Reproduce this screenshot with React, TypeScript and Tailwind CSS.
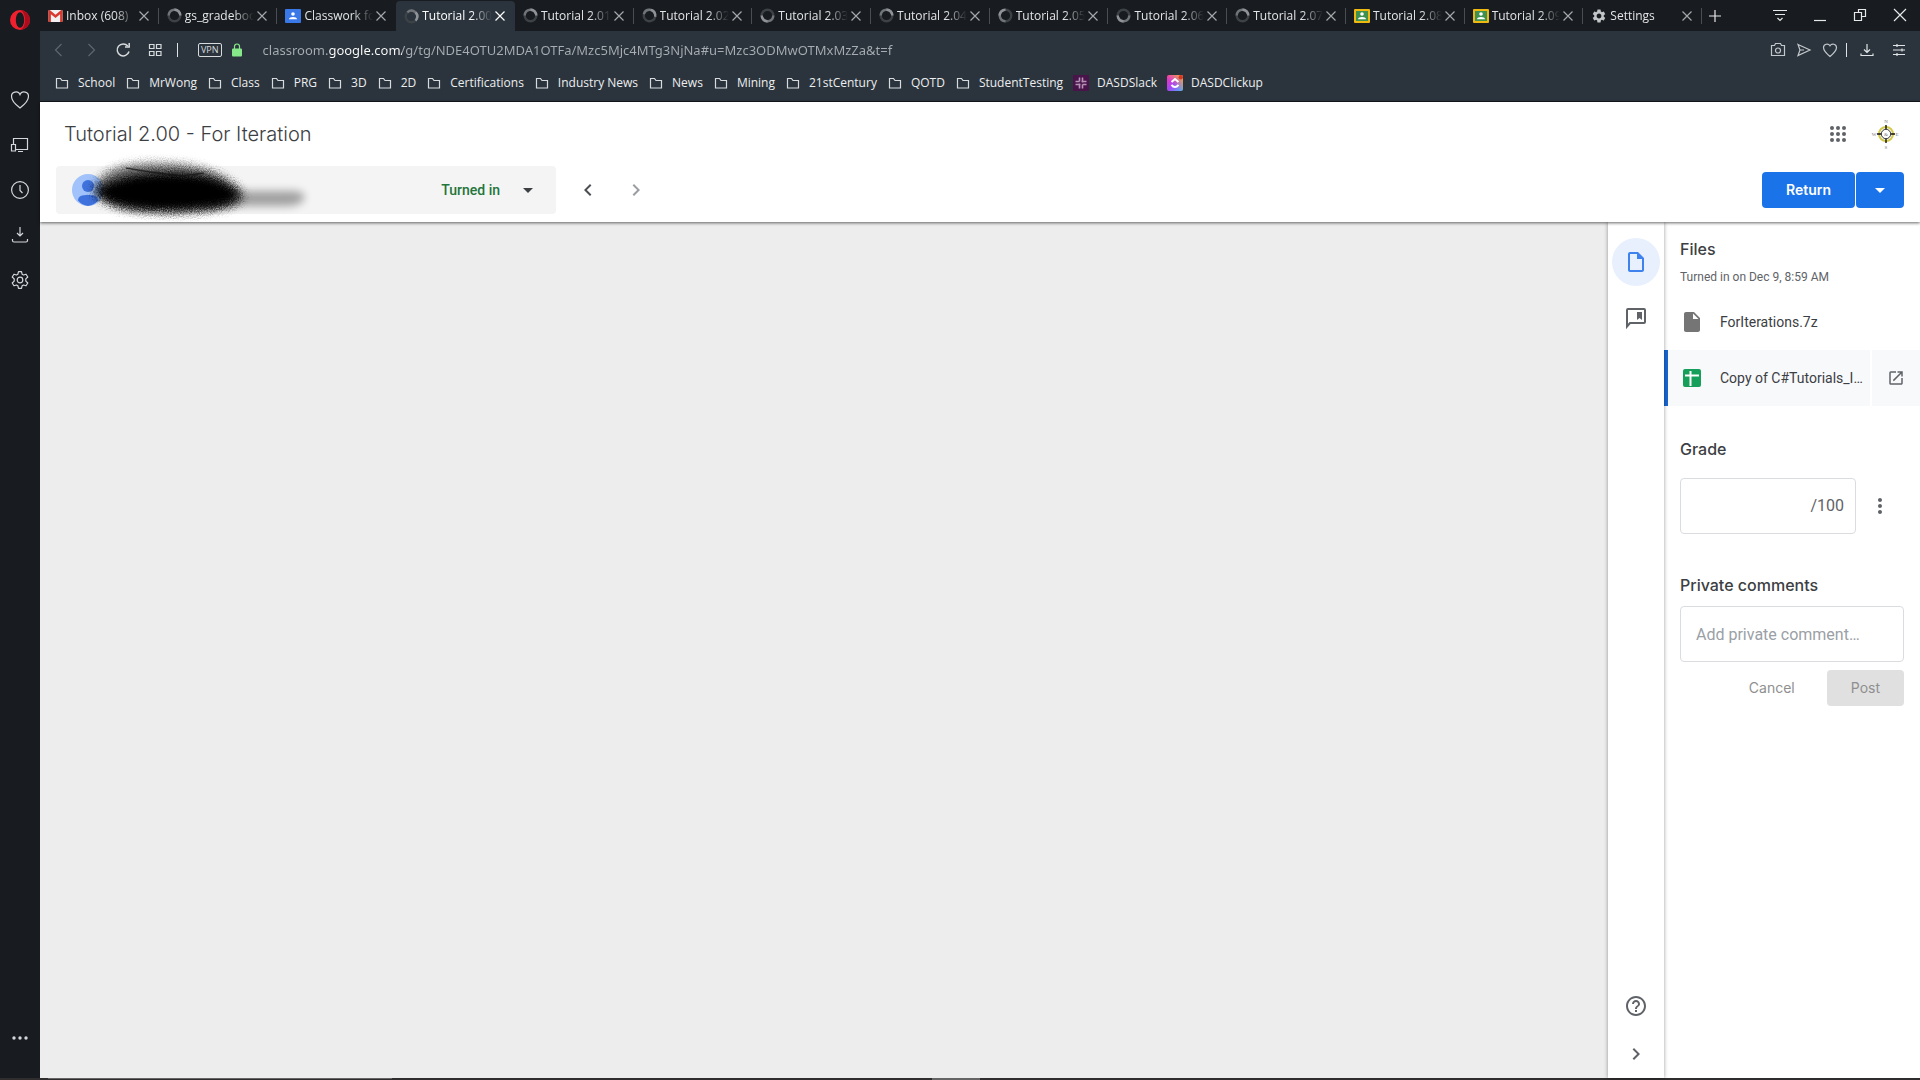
import { useState } from "react";
import type { ReactNode } from "react";
import {
  MdArrowDropDown,
  MdChevronLeft,
  MdChevronRight,
  MdHelpOutline,
  MdInsertDriveFile,
  MdMoreVert,
  MdOpenInNew,
  MdOutlineInsertDriveFile,
  MdSettings,
} from "react-icons/md";

type TabIcon = "gmail" | "spinner" | "classBlue" | "classGreen" | "settings";

interface Tab {
  title: string;
  icon: TabIcon;
  turn?: string;
}

const tabs: Tab[] = [
  { title: "Inbox (608)", icon: "gmail" },
  { title: "gs_gradeboo", icon: "spinner", turn: "rotate-0" },
  { title: "Classwork fo", icon: "classBlue" },
  { title: "Tutorial 2.00", icon: "spinner", turn: "rotate-45" },
  { title: "Tutorial 2.01", icon: "spinner", turn: "rotate-0" },
  { title: "Tutorial 2.02", icon: "spinner", turn: "rotate-12" },
  { title: "Tutorial 2.03", icon: "spinner", turn: "rotate-180" },
  { title: "Tutorial 2.04", icon: "spinner", turn: "rotate-0" },
  { title: "Tutorial 2.05", icon: "spinner", turn: "-rotate-90" },
  { title: "Tutorial 2.06", icon: "spinner", turn: "rotate-180" },
  { title: "Tutorial 2.07", icon: "spinner", turn: "rotate-0" },
  { title: "Tutorial 2.08", icon: "classGreen" },
  { title: "Tutorial 2.09", icon: "classGreen" },
  { title: "Settings", icon: "settings" },
];

const bookmarks = [
  "School", "MrWong", "Class", "PRG", "3D", "2D", "Certifications", "Industry News",
  "News", "Mining", "21stCentury", "QOTD", "StudentTesting",
];

// Thin outline icon used all over the browser chrome
function Line({ children, size = 16, className = "" }: { children: ReactNode; size?: number; className?: string }) {
  return (
    <svg
      width={size}
      height={size}
      viewBox={`0 0 ${size} ${size}`}
      fill="none"
      stroke="currentColor"
      strokeWidth="1.2"
      className={`shrink-0 ${className}`}
    >
      {children}
    </svg>
  );
}

function Favicon({ icon, turn = "" }: { icon: TabIcon; turn?: string }) {
  if (icon === "gmail") {
    return (
      <svg width="15" height="12" viewBox="0 0 14 12" className="shrink-0">
        <rect width="14" height="12" rx="1" fill="#f1f1f1" />
        <path d="M0 1v11h2.400V4.200L7 8l4.600-3.800V12H14V1a1 1 0 0 0-1.600-.8L7 4.800 1.600.2A1 1 0 0 0 0 1Z" fill="#d93a2f" />
      </svg>
    );
  }
  if (icon === "spinner") {
    return (
      <svg width="15" height="15" viewBox="0 0 15 15" fill="none" strokeWidth="2.4" className={`shrink-0 ${turn}`}>
        <circle cx="7.5" cy="7.5" r="5.8" stroke="#3d4247" />
        <path d="M1.700 7.500a5.800 5.800 0 0 1 11.200-2" stroke="#70757a" />
        <path d="M7.500 1.700a5.800 5.800 0 0 1 5.800 5.800" stroke="#8f9397" />
      </svg>
    );
  }
  if (icon === "settings") {
    return <MdSettings size={16} className="shrink-0 text-[#c3c6c9]" />;
  }
  const blue = icon === "classBlue";
  return (
    <svg width="16" height="14" viewBox="0 0 16 14" className="shrink-0">
      <rect width="16" height="14" rx="1" fill={blue ? "#3b78e7" : "#f0b90f"} />
      {!blue && <rect x="2" y="2" width="12" height="10" fill="#3f9150" />}
      <circle cx="8" cy="5" r="1.8" fill="#fff" />
      <path d="M4 10.200C4 8.600 6 7.900 8 7.900s4 .7 4 2.300Z" fill="#fff" />
    </svg>
  );
}

function TabStrip() {
  const [active, setActive] = useState(3);

  return (
    <div className="flex h-[31px] shrink-0 bg-[#181b1f]">
      <div className="flex min-w-0 flex-1">
        {tabs.map((tab, i) => (
          <div
            key={tab.title}
            className={`flex min-w-0 flex-1 items-center pl-2 ${i === active ? "mt-px rounded-t-sm bg-[#2b343c] text-white" : "text-[#e3e5e7]"}`}
          >
            <button onClick={() => setActive(i)} className="flex min-w-0 flex-1 items-center gap-[3px]">
              <Favicon icon={tab.icon} turn={tab.turn} />
              <span className="min-w-0 flex-1 overflow-hidden whitespace-nowrap mask-r-from-70% mask-r-to-100% text-left text-xs leading-5">
                {tab.title}
              </span>
            </button>
            <button aria-label="Close tab" className={`flex h-5 w-4 shrink-0 items-center justify-center ${i === active ? "text-white" : "text-[#a5a8ab]"}`}>
              <Line size={12}><path d="m1.500 1.500 9 9m0-9-9 9" /></Line>
            </button>
            <span className={`ml-[6px] h-4 w-px shrink-0 ${i === active || i === active - 1 ? "bg-transparent" : "bg-[#4a4d51]"}`} />
          </div>
        ))}
      </div>
      <div className="flex w-[218px] shrink-0 items-center text-[#e6e8ea]">
        <button aria-label="New tab" className="ml-[3px] flex w-5 justify-center">
          <Line size={12}><path d="M6 0v12M0 6h12" /></Line>
        </button>
        <div className="ml-auto flex">
          <button aria-label="Tab menu" className="flex w-10 justify-center">
            <Line size={16}><path d="M1 2.500h14M3 6.500h10M5.500 10 8 12.500l2.500-2.500" /></Line>
          </button>
          <button aria-label="Minimize" className="flex w-10 justify-center">
            <Line size={14}><path d="M1 12.500h12" /></Line>
          </button>
          <button aria-label="Restore" className="flex w-10 justify-center">
            <Line size={14}><path d="M1.500 4.500h7v8h-7zM5.500 4.500v-3h7v7h-4" /></Line>
          </button>
          <button aria-label="Close window" className="flex w-10 justify-center">
            <Line size={14}><path d="m1 1 12 12M13 1 1 13" /></Line>
          </button>
        </div>
      </div>
    </div>
  );
}

function AddressBar() {
  return (
    <div className="flex h-[38px] shrink-0 items-center text-[#d8dbde]">
      <div className="flex items-center pl-[3px]">
        <button aria-label="Back" className="flex w-8 justify-center text-[#5d666e]">
          <Line><path d="M10.500 2 4.500 8l6 6" /></Line>
        </button>
        <button aria-label="Forward" className="flex w-8 justify-center text-[#5d666e]">
          <Line><path d="m5.500 2 6 6-6 6" /></Line>
        </button>
        <button aria-label="Reload" className="flex w-8 justify-center">
          <Line>
            <path d="M14 9.500A6 6 0 1 1 12.800 4" strokeWidth="1.5" />
            <path d="M10 5h4.200V1" strokeWidth="1.5" />
          </Line>
        </button>
        <button aria-label="Speed dial" className="flex w-8 justify-center">
          <Line><path d="M2.500 2.500h4.500v4h-4.500zM9.500 2.500h4.500v4h-4.500zM2.500 9.500h4.500v4h-4.500zM9.500 9.500h4.500v4h-4.500z" /></Line>
        </button>
        <span className="ml-[6px] h-[14px] w-px bg-[#e1e4e7]" />
      </div>
      <span className="ml-5 rounded-[2px] border border-[#d8dbde] px-[2px] text-[9px] leading-3">VPN</span>
      <svg width="12" height="14" viewBox="0 0 12 14" className="ml-[9px] shrink-0">
        <rect x="1" y="5.5" width="10" height="8" rx="1" fill="#86e888" />
        <path d="M3.500 6V3.500a2.500 2.500 0 0 1 5 0V6" fill="none" stroke="#86e888" strokeWidth="1.2" />
      </svg>
      {/* the gradient stops light up the domain part of the address */}
      <input
        aria-label="Address"
        defaultValue="classroom.google.com/g/tg/NDE4OTU2MDA1OTFa/Mzc5Mjc4MTg3NjNa#u=Mzc3ODMwOTMxMzZa&t=f"
        className="ml-5 min-w-0 flex-1 bg-[linear-gradient(90deg,#a7adb3_66px,#fff_66px,#fff_139px,#a7adb3_139px)] bg-clip-text font-['Noto_Sans','Open_Sans',sans-serif] text-[13px] leading-5 text-transparent caret-white outline-none"
      />
      <div className="flex items-center pr-[13px] text-[#c3c8cc]">
        <button aria-label="Snapshot" className="mr-[10px]">
          <Line><path d="M1.500 3.500h3l1-2h5l1 2h3v10h-13z" /><circle cx="8" cy="8.500" r="2.5" /></Line>
        </button>
        <button aria-label="My Flow" className="mr-[10px]">
          <Line><path d="M2 2.500 14 8 2 13.500 4 8zM4 8h4" /></Line>
        </button>
        <button aria-label="Add to bookmarks" className="mr-2">
          <Line><path d="M8 14.500C5 12 1.500 9 1.500 5.500A3.500 3.500 0 0 1 8 3.800a3.500 3.500 0 0 1 6.500 1.700C14.500 9 11 12 8 14.500Z" /></Line>
        </button>
        <span className="mr-3 h-[14px] w-px bg-[#e1e4e7]" />
        <button aria-label="Downloads" className="mr-4">
          <Line className="text-[#e1e4e7]"><path d="M8 2v8.500M5 7.500l3 3 3-3M2 11.500v2h12v-2" /></Line>
        </button>
        <button aria-label="Easy setup">
          <Line className="text-[#e1e4e7]"><path d="M2 3.500h12M2 8h12M2 12.500h12M6 2v3M11 6.500v3M6 11v3" /></Line>
        </button>
      </div>
    </div>
  );
}

function BookmarksBar() {
  return (
    <nav className="flex h-[33px] shrink-0 items-center gap-[10px] overflow-hidden border-b border-[#14181c] pb-1 pl-[14px] text-xs leading-5 text-[#eceef0]">
      {bookmarks.map((name) => (
        <a key={name} href="#" className="flex shrink-0 items-center gap-2">
          <Line className="text-[#d8dbde]"><path d="M2.500 3.500h4l1.500 2h5.500v7.500h-11z" /></Line>
          {name}
        </a>
      ))}
      <a href="#" className="flex shrink-0 items-center gap-2">
        <svg width="16" height="16" viewBox="0 0 16 16">
          <rect width="16" height="16" rx="1" fill="#481449" />
          <path d="M6.500 2.500v4M6.500 8.500v5M9.500 2.500v5M9.500 9.500v4M2.500 9.500h5M9.500 9.500h4M2.500 6.500h4M8.500 6.500h5" stroke="#b793b8" strokeWidth="1.6" />
        </svg>
        DASDSlack
      </a>
      <a href="#" className="flex shrink-0 items-center gap-2">
        <svg width="16" height="16" viewBox="0 0 16 16">
          <defs>
            <linearGradient id="cuBase" x1="0" y1="0" x2="1" y2="1">
              <stop offset="0" stopColor="#ff2fb0" />
              <stop offset=".5" stopColor="#a545f5" />
              <stop offset="1" stopColor="#49b4f5" />
            </linearGradient>
            <linearGradient id="cuWarm" x1="1" y1="0" x2=".4" y2=".6">
              <stop offset="0" stopColor="#ffb02e" />
              <stop offset="1" stopColor="#ffb02e" stopOpacity="0" />
            </linearGradient>
          </defs>
          <rect width="16" height="16" rx="2" fill="url(#cuBase)" />
          <rect width="16" height="16" rx="2" fill="url(#cuWarm)" />
          <path d="m4.500 7 3.500-3 3.500 3M4.500 9.800c2 2.800 5 2.800 7 0" fill="none" stroke="#fff" strokeWidth="2" />
          <circle cx="13.8" cy="2.2" r="2.2" fill="#d9381e" />
        </svg>
        DASDClickup
      </a>
    </nav>
  );
}

function Sidebar() {
  return (
    <aside className="flex w-10 shrink-0 flex-col items-center bg-[#181b20] text-[#d5d8db]">
      <button aria-label="Opera menu" className="flex h-10 items-center">
        <svg width="20" height="20" viewBox="0 0 20 20">
          <ellipse cx="10" cy="10" rx="10" ry="10" fill="#f0202f" />
          <path d="M10 0a10 10 0 0 1 0 20c3-1 5-5 5-10s-2-9-5-10Z" fill="#ab0d1d" />
          <ellipse cx="10" cy="10" rx="4.2" ry="7.8" fill="#181b20" />
        </svg>
      </button>
      <nav className="mt-[37px] flex flex-col pr-px">
        <button aria-label="Bookmarks" className="flex h-[45px] items-center">
          <Line size={20}><path d="M10 18C6 14.800 1.600 11.500 1.600 7A4.400 4.400 0 0 1 10 4.600 4.400 4.400 0 0 1 18.400 7c0 4.500-4.400 7.800-8.400 11Z" /></Line>
        </button>
        <button aria-label="Devices" className="flex h-[45px] items-center">
          <Line size={20}><path d="M3.500 9V3.500h14v11H6M1.500 9.500h4v6.500h-4zM8 16.500h5" /></Line>
        </button>
        <button aria-label="History" className="flex h-[45px] items-center">
          <Line size={20}><circle cx="10" cy="10" r="8.4" /><path d="M10 5v5.500l2.500 2.500" /></Line>
        </button>
        <button aria-label="Downloads" className="flex h-[45px] items-center">
          <Line size={20}><path d="M10 2v9M7 8l3 3 3-3M2.500 14v1.500c0 .8.700 1.500 1.500 1.500h12c.8 0 1.500-.7 1.500-1.500v-1.500" /></Line>
        </button>
        <button aria-label="Settings" className="flex h-[45px] items-center">
          <Line size={20}>
            <path d="M8.500 1.700h3l.6 2.500 1.400.8 2.500-.8 1.800 2.800-2 1.900v2.200l2 1.900-1.800 2.800-2.500-.8-1.400.8-.6 2.500h-3l-.6-2.500-1.400-.8-2.500.8-1.800-2.800 2-1.900V8.900l-2-1.900L4 4.200l2.500.8 1.400-.8Z" strokeLinejoin="round" />
            <circle cx="10" cy="10" r="2.8" />
          </Line>
        </button>
      </nav>
      <button aria-label="More" className="mt-auto mb-8 flex h-4 items-center">
        <svg width="16" height="4" viewBox="0 0 16 4" fill="currentColor">
          <circle cx="2" cy="2" r="1.7" /><circle cx="8" cy="2" r="1.7" /><circle cx="14" cy="2" r="1.7" />
        </svg>
      </button>
    </aside>
  );
}

// Brush stroke that hides the student's name
function Scribble() {
  return (
    <svg width="260" height="72" viewBox="0 0 260 72" className="pointer-events-none absolute -top-3 left-5" aria-hidden="true">
      <defs>
        <filter id="grain" x="-20%" y="-30%" width="140%" height="160%">
          <feGaussianBlur stdDeviation="4.5" result="soft" />
          <feTurbulence type="fractalNoise" baseFrequency=".9" numOctaves="2" result="noise" />
          <feDisplacementMap in="soft" in2="noise" scale="9" xChannelSelector="R" yChannelSelector="G" />
        </filter>
        <filter id="tail" x="-20%" y="-80%" width="140%" height="260%">
          <feGaussianBlur stdDeviation="4" />
        </filter>
      </defs>
      <path d="M130 37h84q16 0 14 7-2 8-20 8h-78Z" fill="#000" opacity=".34" filter="url(#tail)" />
      <path d="M18 34C24 17 46 8 82 9c36 0 60 6 82 26 8 9 2 15-14 19-24 6-82 7-108-1C26 46 16 42 18 34Z" fill="#000" opacity=".55" filter="url(#grain)" />
      <path d="M20 37c12-11 36-18 68-18 32-1 56 4 72 17 6 8-4 14-20 17-30 5-76 5-100-2-10-3-17-8-20-14Z" fill="#000" filter="url(#grain)" />
      <path d="m50 14 24 4 32 4 22-3" fill="none" stroke="#111" strokeWidth="1.5" opacity=".7" />
    </svg>
  );
}

function Header() {
  return (
    <header className="relative z-10 bg-white pb-2 pl-4 shadow-[0_1px_3px_rgba(0,0,0,0.6)]">
      <div className="flex h-16 items-center pr-[18px] pl-2">
        <h1 className="flex-1 font-['Inter','Open_Sans',sans-serif] text-xl leading-6 font-light text-[#3c4043]">Tutorial 2.00 - For Iteration</h1>
        <button aria-label="Google apps" className="mr-6">
          <svg width="16" height="16" viewBox="0 0 16 16" fill="#5f6368">
            {[2, 8, 14].map((y) => [2, 8, 14].map((x) => <circle key={`${x}-${y}`} cx={x} cy={y} r="2" />))}
          </svg>
        </button>
        <button aria-label="Account">
          <svg width="32" height="32" viewBox="0 0 32 32">
            <circle cx="16" cy="16" r="7" fill="none" stroke="#d3c94b" strokeWidth="2" />
            <circle cx="16" cy="16" r="4.7" fill="#fff" stroke="#333" strokeWidth="1" />
            <path d="M16 7v4M16 21v4M7 16h4M21 16h4" stroke="#111" strokeWidth="1.4" />
            <g fill="#777" fontSize="5" fontFamily="Liberation Serif, serif" textAnchor="middle">
              <text x="16" y="5">N</text>
              <text x="16" y="31">S</text>
              <text x="4" y="18">W</text>
              <text x="27" y="18">E</text>
              <text x="16" y="18">&amp;</text>
            </g>
          </svg>
        </button>
      </div>
      <div className="flex items-center justify-between pr-4">
        <div className="flex items-center">
          <button className="relative flex h-12 w-[500px] items-center rounded bg-[#f4f4f4] pr-4 pl-4">
            <svg width="32" height="32" viewBox="0 0 32 32">
              <circle cx="16" cy="16" r="16" fill="#a1c2fa" />
              <circle cx="16" cy="12" r="6" fill="#3f72dd" />
              <path d="M6 26.500C6 22 10 21 16 21s10 1 10 5.500A16 16 0 0 1 16 32a16 16 0 0 1-10-5.500Z" fill="#3f72dd" />
            </svg>
            <span className="ml-auto text-sm leading-5 font-medium text-[#23753a]">Turned in</span>
            <MdArrowDropDown size={24} className="ml-4 text-[#3c4043]" />
            <Scribble />
          </button>
          <button aria-label="Previous student" className="ml-2 flex h-12 w-12 items-center justify-center text-[#4b4e52]">
            <MdChevronLeft size={24} />
          </button>
          <button aria-label="Next student" className="flex h-12 w-12 items-center justify-center text-[#9a9da1]">
            <MdChevronRight size={24} />
          </button>
        </div>
        <div className="flex gap-px">
          <button className="h-9 rounded bg-[#1a73e8] px-6 font-['Inter','Open_Sans',sans-serif] text-sm leading-5 font-semibold text-white">Return</button>
          <button aria-label="Return options" className="flex h-9 w-12 items-center justify-center rounded bg-[#1a73e8] text-white">
            <MdArrowDropDown size={24} />
          </button>
        </div>
      </div>
    </header>
  );
}

function Rail() {
  return (
    <nav className="z-[1] flex w-14 shrink-0 flex-col items-center bg-white pt-4 text-[#5f6368] shadow-[0_0_4px_rgba(0,0,0,0.4)]">
      <button aria-label="Files" className="flex h-12 w-12 items-center justify-center rounded-full bg-[#e8f0fe] text-[#3f82ee]">
        <MdOutlineInsertDriveFile size={24} />
      </button>
      <button aria-label="Comment bank" className="mt-2 flex h-12 w-12 items-center justify-center">
        <svg width="24" height="24" viewBox="0 0 24 24" fill="none" stroke="currentColor" strokeWidth="2">
          <path d="M3 20.500V4a1 1 0 0 1 1-1h16a1 1 0 0 1 1 1v12a1 1 0 0 1-1 1H6Z" />
          <path d="M13 6h5v8l-2.500-2L13 14Z" fill="currentColor" stroke="none" />
        </svg>
      </button>
      <button aria-label="Help" className="mt-auto flex h-12 w-12 items-center justify-center">
        <MdHelpOutline size={24} />
      </button>
      <button aria-label="Hide sidebar" className="flex h-12 w-12 items-center justify-center">
        <MdChevronRight size={24} />
      </button>
    </nav>
  );
}

function GradingPanel() {
  const [comment, setComment] = useState("");
  const heading = "font-['Inter','Open_Sans',sans-serif] text-base leading-6 font-medium text-[#3c4043]";

  return (
    <aside className="w-64 shrink-0 bg-white pt-[15px]">
      <h2 className={`px-4 ${heading}`}>Files</h2>
      <p className="mt-2 mb-[9px] px-4 text-xs leading-4 text-[#5f6368]">Turned in on Dec 9, 8:59 AM</p>
      <a href="#" className="flex h-14 items-center pl-4 text-sm leading-5 text-[#3c4043]">
        <MdInsertDriveFile size={24} className="text-[#757575]" />
        <span className="ml-4">ForIterations.7z</span>
      </a>
      <div className="flex h-14 gap-[2px]">
        <a href="#" className="flex min-w-0 flex-1 items-center border-l-4 border-[#1967d2] bg-[#f8f9fb] pr-1 pl-3 text-sm leading-5 text-[#3c4043]">
          <svg width="24" height="24" viewBox="0 0 24 24" className="shrink-0">
            <rect x="3" y="3" width="18" height="18" rx="2" fill="#169f5b" />
            <path d="M10.500 5v15M5 9.500h14" stroke="#fff" strokeWidth="2" />
          </svg>
          <span className="ml-4 whitespace-nowrap">Copy of C#Tutorials_I…</span>
        </a>
        <a href="#" aria-label="Open in new window" className="flex w-12 items-center justify-center bg-[#f8f9fb] text-[#5f6368]">
          <MdOpenInNew size={18} />
        </a>
      </div>
      <div className="mt-[31px] px-4">
        <label htmlFor="grade" className={`block ${heading}`}>Grade</label>
        <div className="mt-[17px] flex items-center gap-3">
          <div className="flex h-14 w-44 items-center rounded border border-[#dadce0] pr-[11px]">
            <input id="grade" className="min-w-0 flex-1 bg-transparent pl-3 text-right text-base outline-none" />
            <span className="text-base leading-6 text-[#5f6368]">/100</span>
          </div>
          <button aria-label="Grade options" className="text-[#5f6368]">
            <MdMoreVert size={24} />
          </button>
        </div>
        <label htmlFor="comment" className={`mt-[39px] block ${heading}`}>Private comments</label>
        <input
          id="comment"
          value={comment}
          onChange={(e) => setComment(e.target.value)}
          placeholder="Add private comment…"
          className="mt-[9px] h-14 w-full rounded border border-[#dadce0] px-[15px] text-base leading-6 outline-none placeholder:text-[#9aa0a6]"
        />
        <div className="mt-2 flex justify-end gap-2 font-['Inter','Open_Sans',sans-serif] text-sm leading-5 text-[#8f8f8f]">
          <button className="h-9 px-6">Cancel</button>
          <button className="h-9 rounded bg-[#e0e0e0] px-6">Post</button>
        </div>
      </div>
    </aside>
  );
}

export default function App() {
  return (
    <div className="flex h-screen flex-col overflow-hidden">
      <div className="flex min-h-0 flex-1 bg-[#181b20]">
        <Sidebar />
        <div className="flex min-w-0 flex-1 flex-col bg-[#2b343c] font-['Open_Sans',sans-serif]">
          <TabStrip />
          <AddressBar />
          <BookmarksBar />
          <div className="flex min-h-0 flex-1 flex-col font-['Roboto',sans-serif]">
            <Header />
            <div className="flex min-h-0 flex-1">
              <main className="flex-1 bg-[#ededed]" />
              <Rail />
              <GradingPanel />
            </div>
          </div>
        </div>
      </div>
      {/* top edge of the taskbar */}
      <div className="flex h-[2px] shrink-0 bg-[#302d2f] pl-12">
        <span className="w-[344px] border-t border-[#656565]" />
        <span className="ml-[540px] w-12 bg-[#656565]" />
      </div>
    </div>
  );
}
